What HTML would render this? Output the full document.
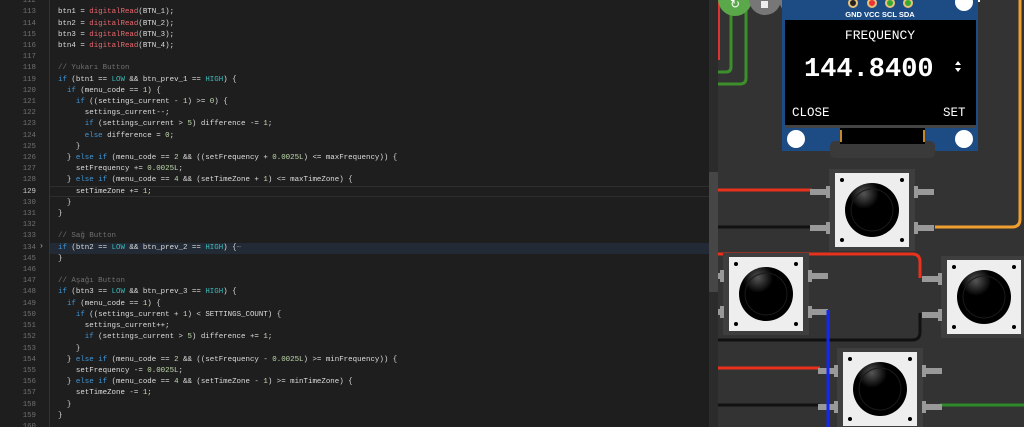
<!DOCTYPE html>
<html><head><meta charset="utf-8"><style>
*{margin:0;padding:0;box-sizing:border-box}
body{width:1024px;height:427px;overflow:hidden;background:#1e1e1e;position:relative;font-family:"Liberation Mono",monospace}
#ed{position:absolute;left:0;top:0;width:709px;height:427px;background:#1e1e1e;overflow:hidden}
.gl{position:absolute;left:49px;top:0;width:1px;height:427px;background:#333}
.ln{position:absolute;left:0;width:36px;text-align:right;color:#707070;font-size:7.4px;line-height:11.2px}
.cd{position:absolute;left:58px;color:#dcdcdc;font-size:7.45px;line-height:11.2px;white-space:pre}
.k{color:#4096d8}.f{color:#e8676e}.c{color:#707070}.n{color:#c0dcae}.t{color:#3cbcbc}
#sb{position:absolute;left:709px;top:0;width:9px;height:427px;background:#2b2b2b}
#th{position:absolute;left:709px;top:172px;width:9px;height:120px;background:#464646}
svg{position:absolute;left:718px;top:0}
</style></head><body>
<div id="ed">
<div class="gl"></div>
<div style="position:absolute;left:50px;top:186px;width:659px;height:11px;border-top:1px solid #2e2e2e;border-bottom:1px solid #2e2e2e"></div>
<div style="position:absolute;left:50px;top:242.6px;width:659px;height:11.2px;background:#222a35"></div>
<div class="ln" style="top:-3.8px">112<br>113<br>114<br>115<br>116<br>117<br>118<br>119<br>120<br>121<br>122<br>123<br>124<br>125<br>126<br>127<br>128<br><span style="color:#c8c8c8">129</span><br>130<br>131<br>132<br>133<br>134<br>145<br>146<br>147<br>148<br>149<br>150<br>151<br>152<br>153<br>154<br>155<br>156<br>157<br>158<br>159<br>160</div>
<div style="position:absolute;left:39px;top:242px;color:#aaa;font-size:8px">›</div>
<div class="cd" style="top:-3.8px">
btn1 = <span class="f">digitalRead</span>(BTN_1);
btn2 = <span class="f">digitalRead</span>(BTN_2);
btn3 = <span class="f">digitalRead</span>(BTN_3);
btn4 = <span class="f">digitalRead</span>(BTN_4);

<span class="c">// Yukarı Button</span>
<span class="k">if</span> (btn1 == <span class="t">LOW</span> &amp;&amp; btn_prev_1 == <span class="t">HIGH</span>) {
  <span class="k">if</span> (menu_code == <span class="n">1</span>) {
    <span class="k">if</span> ((settings_current - <span class="n">1</span>) &gt;= <span class="n">0</span>) {
      settings_current--;
      <span class="k">if</span> (settings_current &gt; <span class="n">5</span>) difference -= <span class="n">1</span>;
      <span class="k">else</span> difference = <span class="n">0</span>;
    }
  } <span class="k">else if</span> (menu_code == <span class="n">2</span> &amp;&amp; ((setFrequency + <span class="n">0.0025L</span>) &lt;= maxFrequency)) {
    setFrequency += <span class="n">0.0025L</span>;
  } <span class="k">else if</span> (menu_code == <span class="n">4</span> &amp;&amp; (setTimeZone + <span class="n">1</span>) &lt;= maxTimeZone) {
    setTimeZone += <span class="n">1</span>;
  }
}

<span class="c">// Sağ Button</span>
<span class="k">if</span> (btn2 == <span class="t">LOW</span> &amp;&amp; btn_prev_2 == <span class="t">HIGH</span>) {<span class="c">⋯</span>
}

<span class="c">// Aşağı Button</span>
<span class="k">if</span> (btn3 == <span class="t">LOW</span> &amp;&amp; btn_prev_3 == <span class="t">HIGH</span>) {
  <span class="k">if</span> (menu_code == <span class="n">1</span>) {
    <span class="k">if</span> ((settings_current + <span class="n">1</span>) &lt; SETTINGS_COUNT) {
      settings_current++;
      <span class="k">if</span> (settings_current &gt; <span class="n">5</span>) difference += <span class="n">1</span>;
    }
  } <span class="k">else if</span> (menu_code == <span class="n">2</span> &amp;&amp; ((setFrequency - <span class="n">0.0025L</span>) &gt;= minFrequency)) {
    setFrequency -= <span class="n">0.0025L</span>;
  } <span class="k">else if</span> (menu_code == <span class="n">4</span> &amp;&amp; (setTimeZone - <span class="n">1</span>) &gt;= minTimeZone) {
    setTimeZone -= <span class="n">1</span>;
  }
}
</div>
</div>
<div id="sb"></div><div id="th"></div>
<svg width="306" height="427" viewBox="718 0 306 427">
<defs><radialGradient id="g" cx="0.35" cy="0.2" r="0.8"><stop offset="0" stop-color="#555"/><stop offset="0.35" stop-color="#000"/><stop offset="1" stop-color="#000"/></radialGradient></defs>
<rect x="718" y="0" width="306" height="427" fill="#333"/>
<rect x="718" y="0" width="2" height="60" fill="#d33"/>
<path d="M718 72 H726 Q731 72 731 67 V0" fill="none" stroke="#3d8f2c" stroke-width="3"/>
<path d="M718 84 H740 Q746 84 746 78 V0" fill="none" stroke="#3d8f2c" stroke-width="3"/>
<circle cx="735" cy="-1" r="17" fill="#5aa84a"/>
<text x="735" y="8" fill="#fff" font-size="12" text-anchor="middle" font-family="DejaVu Sans">↻</text>
<circle cx="765" cy="-1" r="16" fill="#777"/>
<rect x="761" y="1" width="7" height="7" fill="#eee"/>
<circle cx="795" cy="-1" r="16" fill="#777"/>
<rect x="791" y="1" width="2.5" height="8" fill="#eee"/><rect x="796" y="1" width="2.5" height="8" fill="#eee"/>
<rect x="920" y="0" width="60" height="2" fill="#fff"/>
<path d="M935 227 H1012 Q1020 227 1020 219 V0" fill="none" stroke="#f0a030" stroke-width="3"/>
<rect x="782" y="0" width="196" height="151" fill="#1d4c85"/>
<rect x="830" y="141" width="105" height="17" rx="5" fill="#3a3a3a"/>
<rect x="785" y="20" width="191" height="105" fill="#000"/>
<rect x="785" y="125" width="191" height="3" fill="#444"/>
<rect x="840" y="128" width="85" height="16" fill="#000"/>
<rect x="840" y="130" width="2" height="12" fill="#c8882a"/><rect x="923" y="130" width="2" height="12" fill="#c8882a"/>
<circle cx="796" cy="139" r="9" fill="#fff"/><circle cx="964" cy="139" r="9" fill="#fff"/><circle cx="964" cy="2" r="9" fill="#fff"/>
<g stroke="#e8c078" stroke-width="2"><circle cx="853" cy="3" r="4" fill="#222"/><circle cx="872" cy="3" r="4" fill="#e33"/><circle cx="890" cy="3" r="4" fill="#3a3"/><circle cx="908" cy="3" r="4" fill="#3a3"/></g>
<text x="880" y="17" fill="#fff" font-size="7.5" font-weight="bold" text-anchor="middle" font-family="Liberation Sans">GND VCC SCL SDA</text>
<text x="880" y="39" fill="#fff" font-size="13" text-anchor="middle" font-family="Liberation Mono">FREQUENCY</text>
<text x="804" y="76" fill="#fff" font-size="27" font-weight="bold" font-family="Liberation Mono">144.8400</text>
<path d="M955 65 l3 -4 l3 4z M955 68 l3 4 l3 -4z" fill="#fff"/>
<text x="792" y="116" fill="#fff" font-size="12.5" font-family="Liberation Mono">CLOSE</text>
<text x="943" y="116" fill="#fff" font-size="12.5" font-family="Liberation Mono">SET</text>
<path d="M718 190 H812" stroke="#e8321e" stroke-width="3"/>
<path d="M718 227 H812" stroke="#111" stroke-width="3"/>
<path d="M718 254 H912 Q920 254 920 262 V278" fill="none" stroke="#e8321e" stroke-width="3"/>
<path d="M718 340 H912 Q920 340 920 332 V313" fill="none" stroke="#111" stroke-width="3"/>
<path d="M718 368 H820" stroke="#e8321e" stroke-width="3"/>
<path d="M718 405 H820" stroke="#111" stroke-width="3"/>
<path d="M940 405 H1024" stroke="#2f8a2a" stroke-width="3"/>
<g id="b">
<rect x="-43" y="-41" width="86" height="82" fill="#3e3e3e"/>
<rect x="-62" y="-21" width="20" height="6" fill="#999"/><rect x="-46" y="-24" width="4" height="12" fill="#999"/>
<rect x="-62" y="15" width="20" height="6" fill="#999"/><rect x="-46" y="12" width="4" height="12" fill="#999"/>
<rect x="42" y="-21" width="20" height="6" fill="#999"/><rect x="42" y="-24" width="4" height="12" fill="#999"/>
<rect x="42" y="15" width="20" height="6" fill="#999"/><rect x="42" y="12" width="4" height="12" fill="#999"/>
<rect x="-37" y="-37" width="74" height="74" fill="#eee"/>
<circle cx="-30" cy="-30" r="2" fill="#000"/><circle cx="30" cy="-30" r="2" fill="#000"/><circle cx="-30" cy="30" r="2" fill="#000"/><circle cx="30" cy="30" r="2" fill="#000"/>
<circle r="27" fill="url(#g)"/><circle r="21" fill="none" stroke="#1a1a1a"/>
</g>
<use href="#b" transform="translate(872,210)"/>
<use href="#b" transform="translate(766,294)"/>
<use href="#b" transform="translate(984,297)"/>
<use href="#b" transform="translate(880,389)"/>
<path d="M828 310 V427" stroke="#1428f0" stroke-width="3"/>
</svg>
</body></html>
